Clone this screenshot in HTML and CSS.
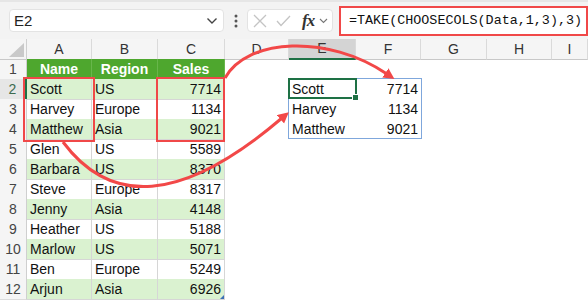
FILE: index.html
```html
<!DOCTYPE html>
<html lang="en">
<head>
    <meta charset="UTF-8">
    <title>TAKE + CHOOSECOLS</title>
    <link rel="stylesheet" href="styles.css">
</head>
<body>
    <div class="app">
        <!-- formula bar -->
        <div class="toolbar">
            <div class="namebox">
                <span>E2</span>
                <svg width="12" height="8" viewBox="0 0 12 8"><polyline points="1.5,1.5 6,6 10.5,1.5" fill="none" stroke="#444" stroke-width="1.4"/></svg>
            </div>
            <div class="dots">
                <svg width="4" height="14" viewBox="0 0 4 14"><circle cx="2" cy="2" r="1.5" fill="#555"/><circle cx="2" cy="7" r="1.5" fill="#555"/><circle cx="2" cy="12" r="1.5" fill="#555"/></svg>
            </div>
            <div class="fxbox">
                <svg class="ico" width="14" height="14" viewBox="0 0 14 14"><path d="M1 1 L13 13 M13 1 L1 13" stroke="#c4c4c4" stroke-width="1.3"/></svg>
                <svg class="ico ok" width="15" height="12" viewBox="0 0 15 12"><polyline points="1,6 5,10.5 14,1" fill="none" stroke="#c4c4c4" stroke-width="1.3"/></svg>
                <i class="fx">fx</i>
                <svg class="ico down" width="9" height="6" viewBox="0 0 9 6"><polyline points="1,1 4.5,4.5 8,1" fill="none" stroke="#777" stroke-width="1.1"/></svg>
            </div>
            <div class="formula">=TAKE(CHOOSECOLS(Data,1,3),3)</div>
        </div>

        <!-- grid -->
        <div class="sheet">
            <div class="row colhead">
                <div class="c corner"><span class="tri"></span></div>
                <div class="c">A</div>
                <div class="c">B</div>
                <div class="c">C</div>
                <div class="c">D</div>
                <div class="c sel">E</div>
                <div class="c">F</div>
                <div class="c">G</div>
                <div class="c">H</div>
                <div class="c">I</div>
            </div>
            <div class="row">
                <div class="rh">1</div>
                <div class="cell hd">Name</div>
                <div class="cell hd">Region</div>
                <div class="cell hd">Sales</div>
                <div class="rest"></div>
            </div>
            <div class="row">
                <div class="rh active-row">2</div>
                <div class="cell band">Scott</div>
                <div class="cell band">US</div>
                <div class="cell band num">7714</div>
                <div></div>
                <div class="out">Scott</div>
                <div class="out num">7714</div>
            </div>
            <div class="row">
                <div class="rh">3</div>
                <div class="cell">Harvey</div>
                <div class="cell">Europe</div>
                <div class="cell num">1134</div>
                <div></div>
                <div class="out">Harvey</div>
                <div class="out num">1134</div>
            </div>
            <div class="row">
                <div class="rh">4</div>
                <div class="cell band">Matthew</div>
                <div class="cell band">Asia</div>
                <div class="cell band num">9021</div>
                <div></div>
                <div class="out">Matthew</div>
                <div class="out num">9021</div>
            </div>
            <div class="row">
                <div class="rh">5</div>
                <div class="cell">Glen</div>
                <div class="cell">US</div>
                <div class="cell num">5589</div>
            </div>
            <div class="row">
                <div class="rh">6</div>
                <div class="cell band">Barbara</div>
                <div class="cell band">US</div>
                <div class="cell band num">8370</div>
            </div>
            <div class="row">
                <div class="rh">7</div>
                <div class="cell">Steve</div>
                <div class="cell">Europe</div>
                <div class="cell num">8317</div>
            </div>
            <div class="row">
                <div class="rh">8</div>
                <div class="cell band">Jenny</div>
                <div class="cell band">Asia</div>
                <div class="cell band num">4148</div>
            </div>
            <div class="row">
                <div class="rh">9</div>
                <div class="cell">Heather</div>
                <div class="cell">US</div>
                <div class="cell num">5188</div>
            </div>
            <div class="row">
                <div class="rh">10</div>
                <div class="cell band">Marlow</div>
                <div class="cell band">US</div>
                <div class="cell band num">5071</div>
            </div>
            <div class="row">
                <div class="rh">11</div>
                <div class="cell">Ben</div>
                <div class="cell">Europe</div>
                <div class="cell num">5249</div>
            </div>
            <div class="row">
                <div class="rh">12</div>
                <div class="cell band">Arjun</div>
                <div class="cell band">Asia</div>
                <div class="cell band num last">6926<span class="resize"></span></div>
            </div>

            <!-- spill range + active cell -->
            <div class="spill"></div>
            <div class="active"><span class="handle"></span></div>
        </div>

        <!-- red annotations -->
        <svg class="notes" width="588" height="300" viewBox="0 0 588 300">
            <defs>
                <marker id="head" markerUnits="userSpaceOnUse" markerWidth="12" markerHeight="12" refX="2" refY="5.5" orient="auto">
                    <path d="M0,0 L11,5.5 L0,11 z" fill="#f24848"/>
                </marker>
            </defs>
            <rect x="24" y="78" width="70" height="63" fill="none" stroke="#f04848" stroke-width="2"/>
            <rect x="157" y="78" width="67" height="63" fill="none" stroke="#f04848" stroke-width="2"/>
            <path d="M225 78 C247 38, 328 34, 387 74" fill="none" stroke="#f24848" stroke-width="3" marker-end="url(#head)"/>
            <path d="M63 142 C110 205, 180 205, 282 118" fill="none" stroke="#f24848" stroke-width="3" marker-end="url(#head)"/>
        </svg>
    </div>
</body>
</html>
```

FILE: styles.css
```css
body {
    margin: 0;
    font-family: "Liberation Sans", Arial, sans-serif;
    background-color: #fff;
}

.app {
    position: relative;
    width: 588px;
    height: 300px;
    overflow: hidden;
}

/* formula bar */
.toolbar {
    display: flex;
    align-items: center;
    height: 39px;
    padding-left: 9px;
    box-sizing: border-box;
    background-color: #f3f3f3;
    border-top: 2px solid #e6e6e6;
}

.namebox {
    width: 215px;
    height: 23px;
    box-sizing: border-box;
    display: flex;
    align-items: center;
    justify-content: space-between;
    padding: 0 5px 0 4px;
    background-color: #fff;
    border: 1px solid #e3e3e3;
    border-radius: 4px;
    font-size: 15px;
    color: #222;
}

.dots {
    width: 23px;
    display: flex;
    justify-content: center;
}

.fxbox {
    width: 86px;
    height: 23px;
    box-sizing: border-box;
    display: flex;
    align-items: center;
    background-color: #fff;
    border: 1px solid #e3e3e3;
    border-radius: 4px;
}

.fxbox .ico {
    margin-left: 5px;
}

.fxbox .ok {
    margin-left: 9px;
}

.fx {
    margin-left: 11px;
    font-family: "Liberation Serif", serif;
    font-size: 17px;
    font-weight: bold;
    color: #333;
    letter-spacing: -1px;
}

.fxbox .down {
    margin-left: 5px;
}

.formula {
    flex: 1;
    height: 30px;
    margin-left: 6px;
    box-sizing: border-box;
    display: flex;
    align-items: center;
    padding-left: 8px;
    background-color: #fff;
    border: 2px solid #f04848;
    font-family: "Liberation Mono", monospace;
    font-size: 13.4px;
    color: #111;
    white-space: nowrap;
}

/* grid */
.sheet {
    position: relative;
}

.row {
    display: grid;
    grid-template-columns: 27px 65px 66px 67px 64px 67px 65px 66px 65px 1fr;
    height: 20px;
    font-size: 14px;
    color: #111;
}

.colhead .c {
    background-color: #f5f5f5;
    border-right: 1px solid #dadada;
    border-bottom: 1px solid #c8c8c8;
    text-align: center;
    line-height: 20px;
    color: #333;
}

.colhead .corner {
    position: relative;
    border-right-color: #cfcfcf;
}

.tri {
    position: absolute;
    right: 2px;
    bottom: 2px;
    width: 0;
    height: 0;
    border-left: 15px solid transparent;
    border-bottom: 14px solid #c9c9c9;
}

.colhead .sel {
    background-color: #d4d4d4;
    border-bottom: 2px solid #1e7145;
    line-height: 19px;
}

.rh {
    background-color: #f5f5f5;
    border-right: 1px solid #cfcfcf;
    border-bottom: 1px solid #dcdcdc;
    text-align: center;
    line-height: 20px;
    color: #444;
}

.rh.active-row {
    background-color: #e6e6e6;
    border-right: 2px solid #1e7145;
    color: #3d6b4f;
}

.cell {
    position: relative;
    padding: 0 3px;
    border-right: 1px solid #d6d6d6;
    border-bottom: 1px solid #d6d6d6;
    line-height: 20px;
    white-space: nowrap;
    overflow: hidden;
}

.cell.hd {
    background-color: #4ea72e;
    color: #fff;
    font-weight: bold;
    text-align: center;
    border-right-color: #68b64b;
    border-bottom-color: #4ea72e;
}

.band {
    background-color: #daf2d0;
}

.num {
    text-align: right;
}

.out {
    padding: 0 3px;
    line-height: 20px;
    white-space: nowrap;
}

.rest {
    grid-column: 5 / -1;
}

.resize {
    position: absolute;
    right: 0;
    bottom: 0;
    width: 0;
    height: 0;
    border-left: 4px solid transparent;
    border-bottom: 4px solid #3b6fb6;
}

.spill {
    position: absolute;
    left: 288px;
    top: 39px;
    width: 134px;
    height: 61px;
    box-sizing: border-box;
    border: 1px solid #7fa7dc;
}

.active {
    position: absolute;
    left: 288px;
    top: 39px;
    width: 69px;
    height: 21px;
    box-sizing: border-box;
    border: 2px solid #1e7145;
}

.handle {
    position: absolute;
    right: -4px;
    bottom: -4px;
    width: 5px;
    height: 5px;
    background-color: #1e7145;
    border: 1px solid #fff;
}

.notes {
    position: absolute;
    top: 0;
    left: 0;
    pointer-events: none;
}
```
